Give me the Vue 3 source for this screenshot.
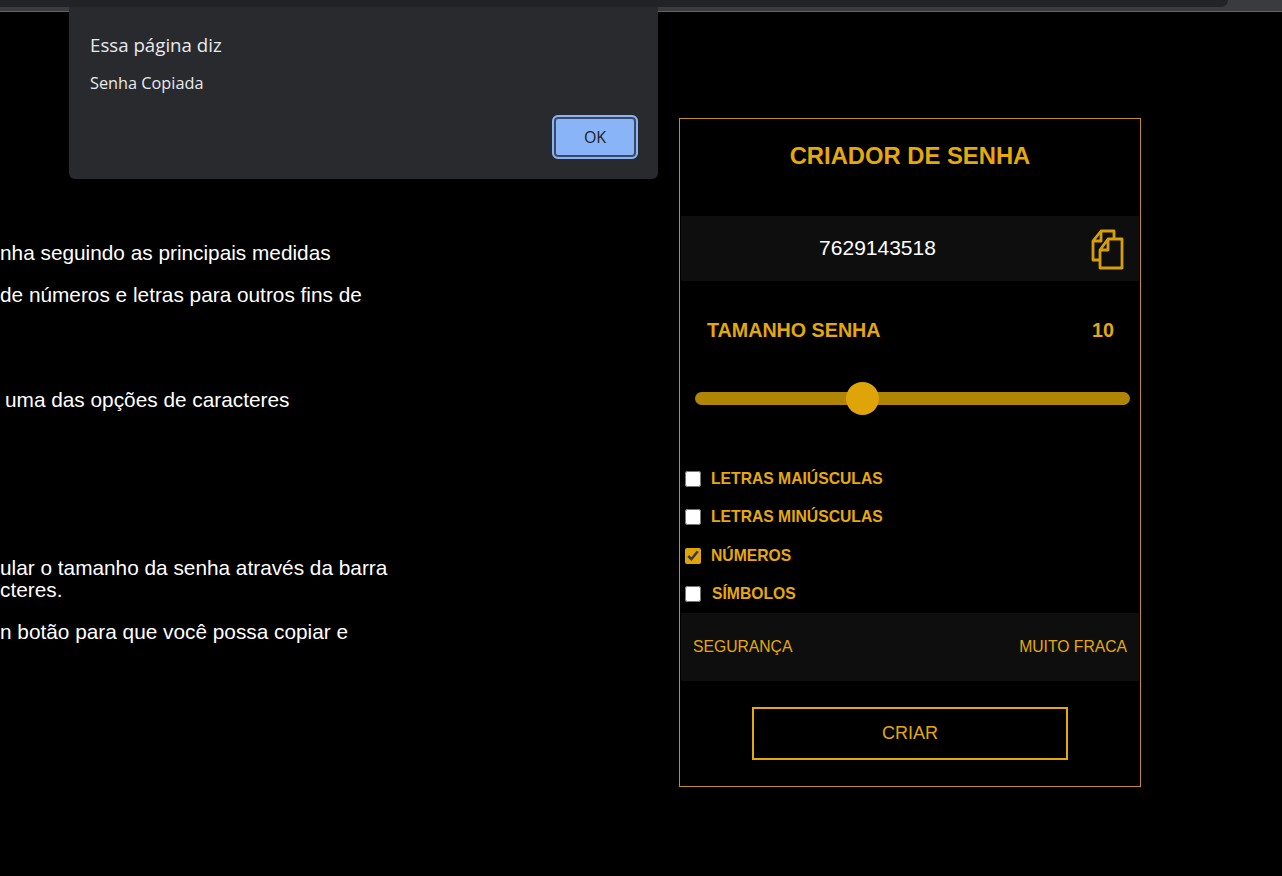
<script setup>
import { ref } from 'vue'

const password = ref('7629143518')
const size = ref(10)
const options = ref([
  { id: 'upper', label: 'LETRAS MAIÚSCULAS', checked: false },
  { id: 'lower', label: 'LETRAS MINÚSCULAS', checked: false },
  { id: 'numbers', label: 'NÚMEROS', checked: true },
  { id: 'symbols', label: 'SÍMBOLOS', checked: false },
])
</script>

<template>
  <div class="page">
    <div class="browser-bar">
      <div class="browser-bar__field" />
    </div>

    <main class="content">
      <section class="about">
        <p class="about__line about__line--first">nha seguindo as principais medidas</p>
        <p class="about__line about__line--second">de números e letras para outros fins de</p>
        <p class="about__line about__line--third">uma das opções de caracteres</p>
        <div class="about__block">
          <p class="about__line">ular o tamanho da senha através da barra</p>
          <p class="about__line">cteres.</p>
        </div>
        <p class="about__line about__line--last">n botão para que você possa copiar e</p>
      </section>

      <section class="card">
        <h1 class="card__title">CRIADOR DE SENHA</h1>

        <div class="result">
          <span class="result__value">{{ password }}</span>
          <svg class="result__copy" viewBox="0 0 34 42" fill="none" stroke="currentColor" stroke-width="2.8" stroke-linejoin="round" aria-hidden="true">
            <path d="M9 31H3V12L11 2H24V9" />
            <path d="M11 2V12H3" />
            <path d="M10 21L18 10H32V39H10Z" />
            <path d="M18 10V21H10" />
          </svg>
        </div>

        <div class="size">
          <span>TAMANHO SENHA</span>
          <span>{{ size }}</span>
        </div>
        <input v-model="size" class="slider" type="range" min="4" max="20" />

        <ul class="options">
          <li v-for="option in options" :key="option.id" class="options__item">
            <input :id="option.id" v-model="option.checked" type="checkbox" class="options__check" />
            <label :for="option.id" class="options__label" :class="{ 'options__label--shift': option.id === 'symbols' }">{{ option.label }}</label>
          </li>
        </ul>

        <div class="strength">
          <span>SEGURANÇA</span>
          <span>MUITO FRACA</span>
        </div>

        <div class="actions">
          <button type="button" class="create">CRIAR</button>
        </div>
      </section>
    </main>

    <!-- Browser alert on top of the page -->
    <div class="alert" role="alertdialog">
      <p class="alert__title">Essa página diz</p>
      <p class="alert__text">Senha Copiada</p>
      <div class="alert__footer">
        <button type="button" class="alert__ok">OK</button>
      </div>
    </div>
  </div>
</template>

<style>
html,
body {
  background: #000;
}
</style>

<style scoped>
.page {
  position: relative;
  width: 1282px;
  height: 876px;
  overflow: hidden;
  background: #000;
  font-family: 'Liberation Sans', Arial, sans-serif;
}

.browser-bar {
  height: 12px;
  background: #3a3b3f;
  border-bottom: 1px solid #626366;
  box-sizing: border-box;
}

.browser-bar__field {
  width: 1228px;
  height: 7px;
  background: #222327;
  border-bottom-right-radius: 8px;
}

.content {
  display: flex;
  align-items: flex-start;
}

.about {
  width: 679px;
  flex-shrink: 0;
  padding-top: 230px;
  color: #fff;
  font-size: 20.8px;
  line-height: 22px;
}

.about__line {
  margin: 0;
  white-space: nowrap;
}

.about__line--second {
  margin-top: 20px;
}

.about__line--third {
  margin-top: 83px;
  padding-left: 5px;
}

.about__block {
  margin-top: 146px;
}

.about__line--last {
  margin-top: 20px;
}

.card {
  width: 462px;
  height: 669px;
  margin-top: 106px;
  box-sizing: border-box;
  border: 1px solid #c4920a;
  color: #e5a90a;
  display: flex;
  flex-direction: column;
}

.card__title {
  height: 97px;
  margin: 0;
  padding-top: 23px;
  box-sizing: border-box;
  font-size: 23.8px;
  line-height: 28px;
  font-weight: 700;
  text-align: center;
}

.result {
  height: 65px;
  display: flex;
  align-items: center;
  background: #0e0e0e;
  margin: 0 1px;
}

.result__value {
  width: 393px;
  padding-bottom: 2px;
  color: #fff;
  font-size: 21px;
  text-align: center;
}

.result__copy {
  width: 34px;
  height: 42px;
  margin: 2px 0 0 16px;
  color: #d69e08;
}

.size {
  display: flex;
  justify-content: space-between;
  padding: 37px 26px 0 27px;
  font-size: 19.7px;
  line-height: 24px;
  font-weight: 700;
}

.slider {
  appearance: none;
  -webkit-appearance: none;
  display: block;
  width: 435px;
  height: 13px;
  margin: 50px 0 0 15px;
  border-radius: 7px;
  background: #b08506;
  outline: none;
}

.slider::-webkit-slider-thumb {
  -webkit-appearance: none;
  width: 33px;
  height: 33px;
  border-radius: 50%;
  background: #dfa508;
  cursor: pointer;
}

.options {
  list-style: none;
  margin: 0;
  padding: 65px 0 0 5px;
  display: flex;
  flex-direction: column;
  gap: 20.3px;
}

.options__item {
  display: flex;
  align-items: center;
  height: 18px;
}

.options__check {
  width: 16px;
  height: 16px;
  margin: 0;
  accent-color: #e0a50a;
}

.options__label {
  margin-left: 10px;
  font-size: 15.7px;
  line-height: 18px;
  font-weight: 700;
}

.options__label--shift {
  margin-left: 11px;
}

.strength {
  height: 68px;
  margin: 10px 1px 0;
  padding: 1px 12px 0 12px;
  box-sizing: border-box;
  display: flex;
  align-items: center;
  justify-content: space-between;
  background: #0e0e0e;
  font-size: 15.7px;
}

.actions {
  display: flex;
  justify-content: center;
  padding-top: 26px;
}

.create {
  width: 316px;
  height: 53px;
  border: 2px solid #e5a90a;
  background: transparent;
  color: #e5a90a;
  font-family: inherit;
  font-size: 18px;
  cursor: pointer;
}

.alert {
  position: absolute;
  left: 69px;
  top: 7px;
  width: 589px;
  height: 172px;
  box-sizing: border-box;
  padding: 27px 20px 0 21px;
  border-radius: 0 0 6px 6px;
  background: #292a2d;
  color: #e8eaed;
  font-family: 'Open Sans', 'Noto Sans', sans-serif;
  display: flex;
  flex-direction: column;
}

.alert__title {
  margin: 0;
  font-size: 18.7px;
  line-height: 22px;
}

.alert__text {
  margin: 17px 0 0;
  font-size: 16.3px;
  line-height: 20px;
}

.alert__footer {
  display: flex;
  justify-content: flex-end;
  margin-top: 22px;
}

.alert__ok {
  width: 86px;
  height: 44px;
  box-sizing: border-box;
  border: 2px solid #3b4a63;
  border-radius: 6px;
  outline: 2px solid #8ab4f8;
  outline-offset: -2px;
  box-shadow: inset 0 0 0 2px #3b4a63;
  background: #8ab4f8;
  color: #202124;
  font-family: inherit;
  font-size: 16px;
}
</style>
